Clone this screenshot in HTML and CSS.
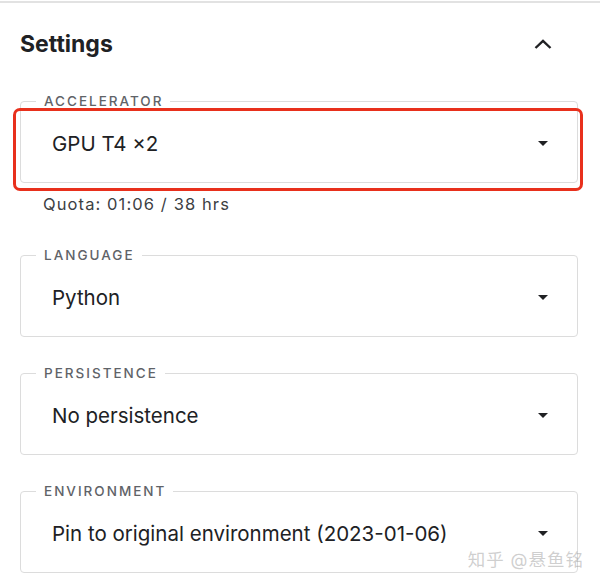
FILE: index.html
```html
<!DOCTYPE html>
<html>
<head>
<meta charset="utf-8">
<link rel="stylesheet" href="styles.css">
</head>
<body>
<div class="panel">
  <div class="header">
    <h2 class="title">Settings</h2>
    <svg class="chevron" width="18" height="10" viewBox="0 0 18 10"><polyline points="1.5,9 9,1.8 16.5,9" fill="none" stroke="#202124" stroke-width="2.4"/></svg>
  </div>

  <div class="group accel">
    <fieldset class="field">
      <legend class="label">ACCELERATOR</legend>
      <div class="row"><span class="value">GPU T4 ×2</span><span class="caret"></span></div>
    </fieldset>
    <div class="highlight"></div>
    <p class="helper">Quota: 01:06 / 38 hrs</p>
  </div>

  <fieldset class="field">
    <legend class="label">LANGUAGE</legend>
    <div class="row"><span class="value">Python</span><span class="caret"></span></div>
  </fieldset>

  <fieldset class="field">
    <legend class="label">PERSISTENCE</legend>
    <div class="row"><span class="value">No persistence</span><span class="caret"></span></div>
  </fieldset>

  <fieldset class="field">
    <legend class="label">ENVIRONMENT</legend>
    <div class="row"><span class="value">Pin to original environment (2023-01-06)</span><span class="caret"></span></div>
  </fieldset>

  <div class="watermark">知乎 @悬鱼铭</div>
</div>
</body>
</html>
```

FILE: styles.css
```css
html, body {
  margin: 0;
  padding: 0;
  background: #ffffff;
}
body {
  font-family: Inter, "Noto Sans CJK SC", sans-serif;
  color: #202124;
}
.panel {
  position: relative;
  margin-top: 1px;
  border-top: 2px solid #e2e2e2;
  height: 581px;
  box-sizing: border-box;
}
.header {
  height: 90px;
  display: flex;
  align-items: center;
  justify-content: space-between;
  padding: 0 48px 8px 20px;
  box-sizing: border-box;
  height: 90px;
}
.title {
  margin: 0;
  font-size: 23px;
  font-weight: 700;
  line-height: 28px;
  color: #202124;
}
.chevron {
  display: block;
}
.group {
  position: relative;
  margin-bottom: 33px;
}
.field {
  margin: 0 22px 28px 20px;
  padding: 0 0 5px 0;
  border: 1px solid #dcdcdc;
  border-radius: 4px;
  min-width: 0;
}
.group .field {
  margin-bottom: 0;
}
.label {
  margin-left: 15px;
  padding: 0 7px 0 8px;
  font-size: 13.5px;
  line-height: 16px;
  letter-spacing: 2px;
  font-weight: 500;
  color: #5f6368;
}
.row {
  height: 68px;
  display: flex;
  align-items: center;
  justify-content: space-between;
  padding: 0 29px 0 31px;
}
.value {
  font-size: 20.5px;
  color: #202124;
}
.caret {
  width: 0;
  height: 0;
  border-left: 5px solid transparent;
  border-right: 5px solid transparent;
  border-top: 5px solid #202124;
}
.highlight {
  position: absolute;
  left: 13px;
  top: 15px;
  width: 570px;
  height: 83px;
  box-sizing: border-box;
  border: 3.5px solid #e8301c;
  border-radius: 7px;
}
.helper {
  margin: 11px 0 0 43px;
  font-size: 16.5px;
  line-height: 20px;
  letter-spacing: 1.1px;
  color: #3c4043;
}
.watermark {
  position: absolute;
  right: 16px;
  bottom: 12px;
  font-size: 17.5px;
  line-height: 20px;
  color: rgba(160, 160, 160, 0.5);
  letter-spacing: 1px;
}
```
